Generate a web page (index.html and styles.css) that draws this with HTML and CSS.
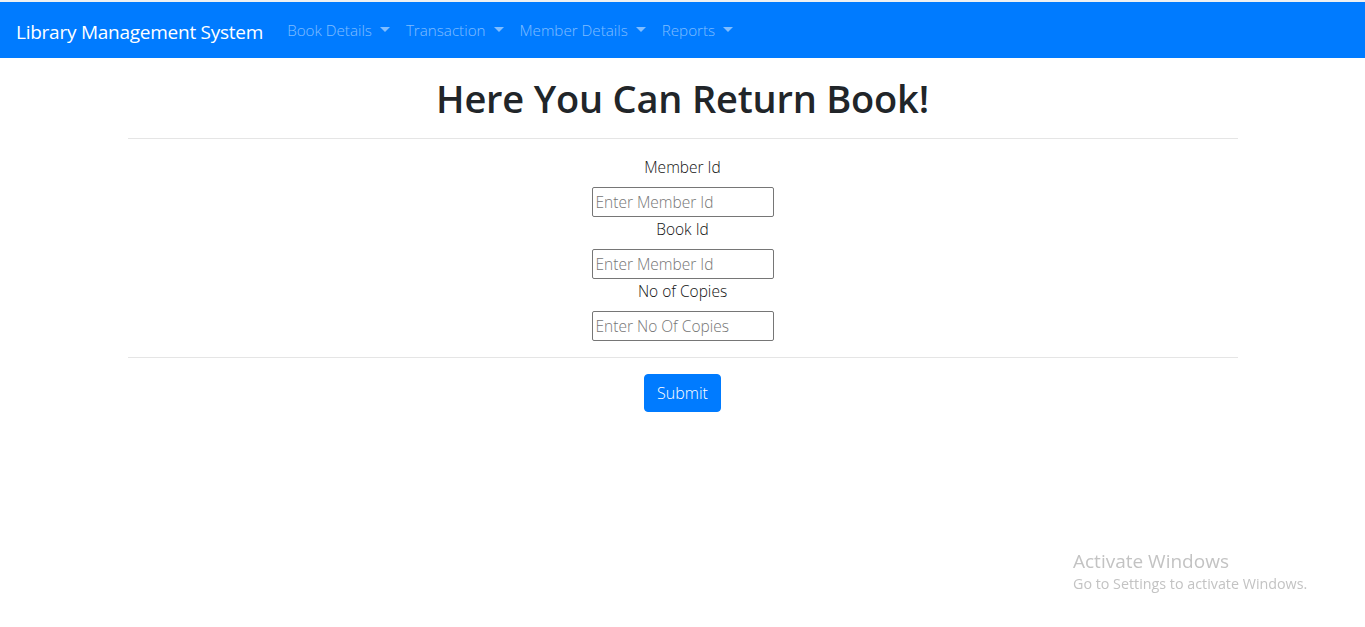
FILE: index.html
```html
<!DOCTYPE html>
<html lang="en">
<head>
<meta charset="utf-8">
<title>Return Book</title>
<link rel="stylesheet" href="styles.css">
</head>
<body>
<div class="topstrip"></div>
<nav class="navbar">
  <a class="brand" href="#">Library Management System</a>
  <ul class="nav">
    <li><a class="nav-link toggle" href="#">Book Details</a></li>
    <li><a class="nav-link toggle" href="#">Transaction</a></li>
    <li><a class="nav-link toggle" href="#">Member Details</a></li>
    <li><a class="nav-link toggle" href="#">Reports</a></li>
  </ul>
</nav>
<main class="container">
  <h1 class="title">Here You Can Return Book!</h1>
  <hr class="rule">
  <form class="form">
    <label class="label" for="mid">Member Id</label>
    <input class="field" id="mid" type="text" placeholder="Enter Member Id">
    <label class="label" for="bid">Book Id</label>
    <input class="field" id="bid" type="text" placeholder="Enter Member Id">
    <label class="label" for="nc">No of Copies</label>
    <input class="field" id="nc" type="text" placeholder="Enter No Of Copies">
  </form>
  <hr class="rule">
  <div class="actions">
    <button class="btn" type="button">Submit</button>
  </div>
</main>
<div class="watermark">
  <div class="wm-title">Activate Windows</div>
  <div class="wm-sub">Go to Settings to activate Windows.</div>
</div>
</body>
</html>
```
FILE: styles.css
```css
* { box-sizing: border-box; }
html, body { margin: 0; padding: 0; }
body {
  font-family: "Open Sans", "Noto Sans", sans-serif;
  font-size: 16px;
  line-height: 1.5;
  color: #212529;
  background: #fff;
}
.topstrip { height: 2px; background: #eef0f2; }
.navbar {
  display: flex;
  align-items: center;
  height: 56px;
  padding: 8px 16px;
  background: #007bff;
}
.brand {
  color: #fff;
  text-decoration: none;
  font-size: 19px;
  letter-spacing: -0.25px;
  line-height: 30px;
  margin-right: 16px;
  padding-top: 4px;
}
.nav {
  display: flex;
  list-style: none;
  margin: 0;
  padding: 0;
}
.nav-link {
  display: block;
  padding: 0 8px;
  color: rgba(255,255,255,0.5);
  text-decoration: none;
  font-size: 15.2px;
  font-weight: 300;
  line-height: 24px;
}
.toggle::after {
  content: "";
  display: inline-block;
  margin-left: 8px;
  vertical-align: 4px;
  border-top: 5px solid;
  border-left: 5px solid transparent;
  border-right: 5px solid transparent;
}
.container {
  width: 1140px;
  margin: 0 auto;
  padding: 0 15px;
}
.title {
  margin: 16px 0 8px;
  font-size: 38px;
  font-weight: 600;
  line-height: 48px;
  text-align: center;
  letter-spacing: -0.2px;
}
.rule {
  margin: 16px 0;
  border: 0;
  border-top: 1px solid rgba(0,0,0,0.1);
}
.form {
  display: flex;
  flex-direction: column;
  align-items: center;
}
.label {
  display: block;
  font-size: 15.5px;
  font-weight: 300;
  color: #111;
  line-height: 24px;
  margin-bottom: 8px;
}
.field {
  width: 182px;
  height: 30px;
  margin: 0;
  padding: 1px 3px;
  border: 1px solid #767676;
  border-radius: 2px;
  font-family: inherit;
  font-size: 15.5px;
  font-weight: 300;
  color: #212529;
}
.field::placeholder { color: #757575; }
.actions {
  display: flex;
  justify-content: center;
}
.btn {
  height: 38px;
  padding: 0 12px;
  border: 1px solid #007bff;
  border-radius: 4px;
  background: #007bff;
  color: #fff;
  font-family: inherit;
  font-size: 16px;
  font-weight: 300;
  line-height: 24px;
}
.watermark {
  position: fixed;
  left: 1073px;
  top: 548px;
  color: #c3c3c3;
  font-family: "Open Sans", sans-serif;
  font-weight: 400;
}
.wm-title { font-size: 19px; line-height: 26px; }
.wm-sub { font-size: 14.3px; line-height: 20px; }
```
